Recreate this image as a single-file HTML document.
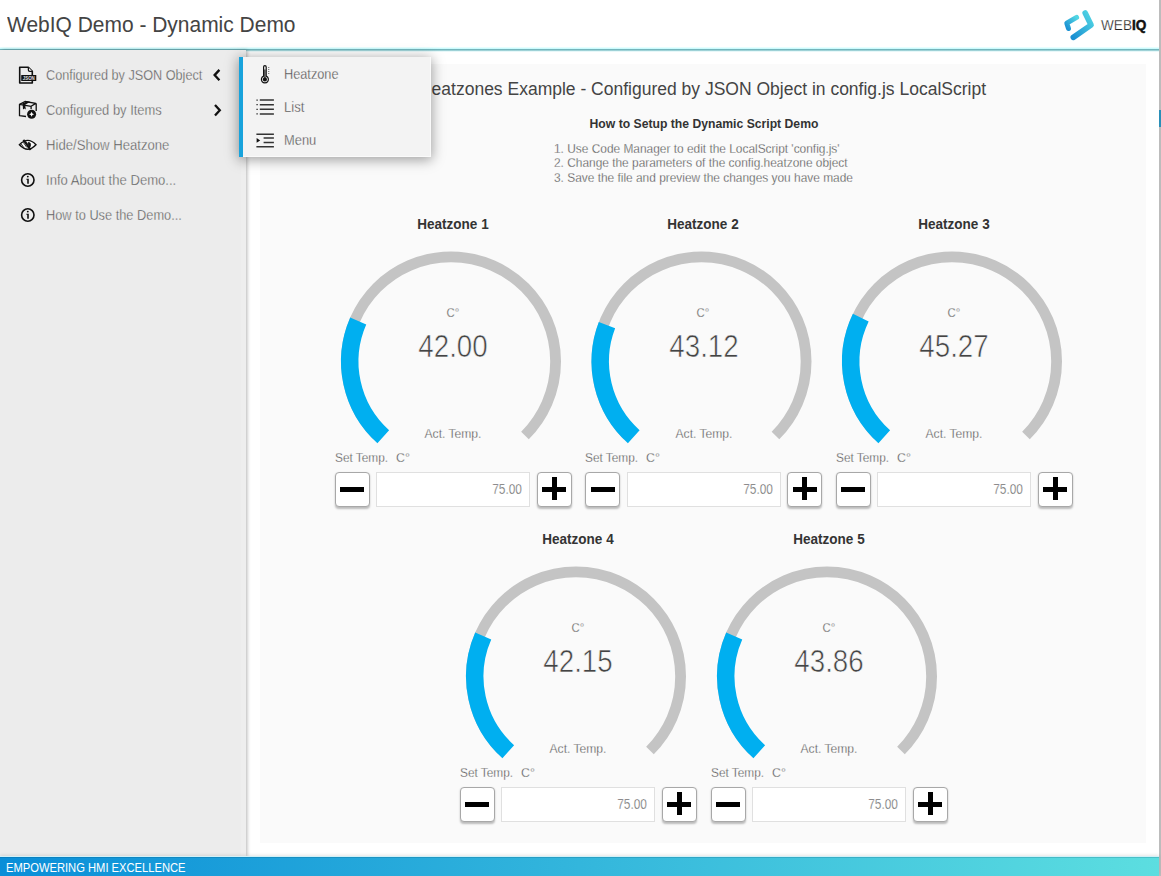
<!DOCTYPE html>
<html><head><meta charset="utf-8"><style>
*{margin:0;padding:0;box-sizing:border-box}
html,body{width:1161px;height:876px;overflow:hidden;background:#fff;font-family:"Liberation Sans", sans-serif;position:relative}
.abs{position:absolute}
.t{position:absolute;white-space:nowrap;line-height:normal}
#hline{position:absolute;left:0;top:47px;width:1159px;height:5px;background:linear-gradient(180deg,#f4ffff 0,#c9fbfd 1.6px,#74b5bc 1.9px,#74b5bc 3.2px,#c8eef1 3.8px,#fff 5px)}
#hline2{display:none}
#side{position:absolute;left:0;top:50px;width:246px;height:807px;background:linear-gradient(90deg,#ececec 241px,#eeeeee 241px);box-shadow:1.5px 0 3.5px rgba(0,0,0,.28)}
#panel{position:absolute;left:260px;top:64px;width:886px;height:779px;background:#fafafa}
#scroll{position:absolute;left:1159px;top:0;width:2px;height:876px;background:#bcbcbc}
#scrollacc{position:absolute;left:1159px;top:110px;width:2px;height:17px;background:#2a8fb8}
#foot{position:absolute;left:0;top:857px;width:1159px;height:19px;background:linear-gradient(90deg,#0a8ed8,#5cdee0);box-shadow:inset 0 1px 0 rgba(0,60,90,.18),0 -1px 0 #d2f1f8,0 -2px 3px rgba(0,0,0,.1)}
#pop{position:absolute;left:239px;top:57px;width:192px;height:100px;background:#f3f3f3;border-left:4px solid #18a3dc;box-shadow:inset -1px -1px 0 rgba(255,255,255,.55),0 2px 12px 1px rgba(0,0,0,.37)}
.btn{position:absolute;width:35px;height:35px;background:#fff;border:1px solid #a8a8a8;border-radius:4px;box-shadow:0 1.5px 2px rgba(0,0,0,.25)}
.mh{position:absolute;left:4.6px;top:14.3px;width:24px;height:5px;background:#000}
.mv{position:absolute;left:14.2px;top:4.8px;width:5px;height:23px;background:#000}
.inp{position:absolute;width:154px;height:35px;background:#fff;border:1px solid #e0e0e0}
</style></head><body>
<div class="t" style="left:6.5px;top:12.94px;font-size:21.5px;color:#444;font-weight:normal;transform:scaleX(0.975);transform-origin:0 0;">WebIQ Demo - Dynamic Demo</div>
<div id="hline"></div><div id="hline2"></div>
<svg class="abs" style="left:1055px;top:5.5px" width="45" height="40" viewBox="0 0 45 40">
<defs><linearGradient id="lg" x1="0" y1="1" x2="1" y2="0"><stop offset="0" stop-color="#1a90d2"/><stop offset="1" stop-color="#52d6e4"/></linearGradient></defs>
<path d="M21.6 11.4L11.8 17.2l1.7 5.3" fill="none" stroke="url(#lg)" stroke-width="5.0" stroke-linecap="round" stroke-linejoin="round"/>
<path d="M30.2 6.9l5.9 12.1L18.3 31.4" fill="none" stroke="url(#lg)" stroke-width="5.6" stroke-linecap="round" stroke-linejoin="round"/>
</svg>
<div class="t" style="left:1101px;top:16.93px;font-size:14px;color:#222;font-weight:normal;transform:scaleX(0.97);transform-origin:0 0;-webkit-text-stroke:0.25px #fff;">WEB<b style="color:#111;-webkit-text-stroke:0.5px #111">IQ</b></div>
<div id="panel"></div>
<div id="side"></div><div id="sideedge"></div>
<div class="t" style="left:45.7px;top:67.13px;font-size:14px;color:#4c4c4c;font-weight:normal;transform:scaleX(0.905);transform-origin:0 0;-webkit-text-stroke:0.35px #ececec;">Configured by JSON Object</div>
<div class="t" style="left:45.7px;top:102.13px;font-size:14px;color:#4c4c4c;font-weight:normal;transform:scaleX(0.924);transform-origin:0 0;-webkit-text-stroke:0.35px #ececec;">Configured by Items</div>
<div class="t" style="left:45.7px;top:137.13px;font-size:14px;color:#4c4c4c;font-weight:normal;transform:scaleX(0.938);transform-origin:0 0;-webkit-text-stroke:0.35px #ececec;">Hide/Show Heatzone</div>
<div class="t" style="left:45.7px;top:172.13px;font-size:14px;color:#4c4c4c;font-weight:normal;transform:scaleX(0.935);transform-origin:0 0;-webkit-text-stroke:0.35px #ececec;">Info About the Demo...</div>
<div class="t" style="left:45.7px;top:207.13px;font-size:14px;color:#4c4c4c;font-weight:normal;transform:scaleX(0.914);transform-origin:0 0;-webkit-text-stroke:0.35px #ececec;">How to Use the Demo...</div>
<svg class="abs" style="left:0;top:0" width="1161" height="876" viewBox="0 0 1161 876">
<!-- JSON file icon -->
<path d="M19.7 67.2h8.6l4 4v11.8h-12.6z" fill="none" stroke="#111" stroke-width="1.6" stroke-linejoin="round"/>
<path d="M28.4 67.4v2.5a1.4 1.4 0 0 0 1.4 1.4h2.4" fill="#fff" stroke="#111" stroke-width="1.3"/>
<rect x="21.2" y="75" width="15.1" height="5.9" rx="0.5" fill="#111"/>
<text x="28.75" y="79.5" font-size="4.8" font-weight="bold" fill="#e0e0e0" text-anchor="middle" font-family="Liberation Sans" textLength="12" lengthAdjust="spacingAndGlyphs">JSON</text>
<!-- Box icon -->
<path d="M19.5 104.4L25 101.5L35.8 103.4L31.1 106.3Z M19.5 104.4V115.7L26 116.5 M31.1 106.3V109 M36.2 103.6V111" fill="none" stroke="#111" stroke-width="1.3" stroke-linejoin="round"/>
<path d="M22.3 103.2L27.5 101.3L30.2 101.8L25.2 104.8L25.8 109.6L24.4 108.6L23 109.6L22.7 104.6Z" fill="#111"/>
<circle cx="31.6" cy="114.3" r="4.5" fill="#111"/>
<path d="M31.6 111.8Q32 113.9 34.1 114.3Q32 114.7 31.6 116.8Q31.2 114.7 29.1 114.3Q31.2 113.9 31.6 111.8Z" fill="#fff"/>
<!-- Eye icon -->
<path d="M19.4 144.8C22.5 141.6 25 140.4 27.7 140.4S33 141.6 36 144.8C33 148 30.4 149.3 27.7 149.3S22.5 148 19.4 144.8z" fill="#fafafa" stroke="#111" stroke-width="1.4"/>
<path d="M28.1 142.3a2.6 2.6 0 0 1 0 5.2z" fill="#111" stroke="#111" stroke-width="0.6"/>
<path d="M23.4 139.8L30.6 149.9" stroke="#111" stroke-width="2"/>
<path d="M21 143.6l3.2 4.6 M23.2 142.2l3.6 5.2 M25.6 141.2l3.4 4.9" stroke="#222" stroke-width="0.9"/>
<!-- Info icons -->
<circle cx="27.8" cy="180" r="6.2" fill="none" stroke="#111" stroke-width="1.6"/>
<circle cx="27.8" cy="176.6" r="0.95" fill="#111"/>
<path d="M26.4 178.7h2.4v5h-1.6v-3.9h-0.8z" fill="#111"/>
<circle cx="27.8" cy="215" r="6.2" fill="none" stroke="#111" stroke-width="1.6"/>
<circle cx="27.8" cy="211.6" r="0.95" fill="#111"/>
<path d="M26.4 213.7h2.4v5h-1.6v-3.9h-0.8z" fill="#111"/>
<!-- chevrons -->
<path d="M219.4 69.9L214.6 75.1l4.8 5.2" fill="none" stroke="#111" stroke-width="2.3"/>
<path d="M215 105L219.8 110.3l-4.8 5.2" fill="none" stroke="#111" stroke-width="2.3"/>
</svg>
<div class="t" style="left:302.5px;width:800px;text-align:center;top:79.36px;font-size:17.5px;color:#444;font-weight:normal;">Heatzones Example - Configured by JSON Object in config.js LocalScript</div>
<div class="t" style="left:303.5px;width:800px;text-align:center;top:116.59px;font-size:12.5px;color:#333;font-weight:bold;transform:scaleX(0.975);transform-origin:50% 0;">How to Setup the Dynamic Script Demo</div>
<div class="t" style="left:553.8px;top:141.13px;font-size:13px;color:#4a4a4a;font-weight:normal;transform:scaleX(0.915);transform-origin:0 0;-webkit-text-stroke:0.28px #fafafa;">1. Use Code Manager to edit the LocalScript 'config.js'</div>
<div class="t" style="left:553.8px;top:155.44px;font-size:13px;color:#4a4a4a;font-weight:normal;transform:scaleX(0.915);transform-origin:0 0;-webkit-text-stroke:0.28px #fafafa;">2. Change the parameters of the config.heatzone object</div>
<div class="t" style="left:553.8px;top:169.74px;font-size:13px;color:#4a4a4a;font-weight:normal;transform:scaleX(0.915);transform-origin:0 0;-webkit-text-stroke:0.28px #fafafa;">3. Save the file and preview the changes you have made</div>
<svg class="abs" style="left:0;top:0" width="1161" height="876"><path d="M377.04 435.46A104.6 104.6 0 1 1 524.96 435.46" stroke="#c4c4c4" stroke-width="10.8" fill="none"/>
<path d="M383.25 436.74A101.25 101.25 0 0 1 358.22 320.96" stroke="#00aff0" stroke-width="17.5" fill="none"/>
<path d="M627.54 435.46A104.6 104.6 0 1 1 775.46 435.46" stroke="#c4c4c4" stroke-width="10.8" fill="none"/>
<path d="M633.75 436.74A101.25 101.25 0 0 1 606.97 325.22" stroke="#00aff0" stroke-width="17.5" fill="none"/>
<path d="M878.04 435.46A104.6 104.6 0 1 1 1025.96 435.46" stroke="#c4c4c4" stroke-width="10.8" fill="none"/>
<path d="M884.25 436.74A101.25 101.25 0 0 1 860.77 317.59" stroke="#00aff0" stroke-width="17.5" fill="none"/>
<path d="M502.04 750.46A104.6 104.6 0 1 1 649.96 750.46" stroke="#c4c4c4" stroke-width="10.8" fill="none"/>
<path d="M508.25 751.74A101.25 101.25 0 0 1 483.22 635.96" stroke="#00aff0" stroke-width="17.5" fill="none"/>
<path d="M753.04 750.46A104.6 104.6 0 1 1 900.96 750.46" stroke="#c4c4c4" stroke-width="10.8" fill="none"/>
<path d="M759.25 751.74A101.25 101.25 0 0 1 734.22 635.96" stroke="#00aff0" stroke-width="17.5" fill="none"/></svg>
<div class="t" style="left:52.5px;width:800px;text-align:center;top:215.66px;font-size:14.3px;color:#333;font-weight:bold;transform:scaleX(0.945);transform-origin:50% 0;">Heatzone 1</div>
<div class="t" style="left:52.5px;width:800px;text-align:center;top:306.04px;font-size:12px;color:#4c4c4c;font-weight:normal;transform:scaleX(0.95);transform-origin:50% 0;-webkit-text-stroke:0.3px #fafafa;">C°</div>
<div class="t" style="left:53px;width:800px;text-align:center;top:328.71px;font-size:30.6px;color:#444;font-weight:normal;transform:scaleX(0.905);transform-origin:50% 0;-webkit-text-stroke:0.6px #fafafa;">42.00</div>
<div class="t" style="left:53px;width:800px;text-align:center;top:426.13px;font-size:13px;color:#4c4c4c;font-weight:normal;transform:scaleX(0.93);transform-origin:50% 0;-webkit-text-stroke:0.3px #fafafa;">Act. Temp.</div>
<div class="t" style="left:334.5px;top:450.44px;font-size:13px;color:#4c4c4c;font-weight:normal;transform:scaleX(0.91);transform-origin:0 0;-webkit-text-stroke:0.3px #fafafa;">Set Temp.</div>
<div class="t" style="left:395.8px;top:450.44px;font-size:13px;color:#4c4c4c;font-weight:normal;transform:scaleX(0.95);transform-origin:0 0;-webkit-text-stroke:0.3px #fafafa;">C°</div>
<div class="btn" style="left:334.5px;top:471.5px"><div class="mh"></div></div>
<div class="inp" style="left:376px;top:471.5px"></div>
<div class="t" style="left:-278px;width:800px;text-align:right;top:481.33px;font-size:14px;color:#585858;font-weight:normal;transform:scaleX(0.85);transform-origin:100% 0;-webkit-text-stroke:0.35px #fff;">75.00</div>
<div class="btn" style="left:536.5px;top:471.5px"><div class="mh"></div><div class="mv"></div></div>
<div class="t" style="left:303.0px;width:800px;text-align:center;top:215.66px;font-size:14.3px;color:#333;font-weight:bold;transform:scaleX(0.945);transform-origin:50% 0;">Heatzone 2</div>
<div class="t" style="left:303.0px;width:800px;text-align:center;top:306.04px;font-size:12px;color:#4c4c4c;font-weight:normal;transform:scaleX(0.95);transform-origin:50% 0;-webkit-text-stroke:0.3px #fafafa;">C°</div>
<div class="t" style="left:303.5px;width:800px;text-align:center;top:328.71px;font-size:30.6px;color:#444;font-weight:normal;transform:scaleX(0.905);transform-origin:50% 0;-webkit-text-stroke:0.6px #fafafa;">43.12</div>
<div class="t" style="left:303.5px;width:800px;text-align:center;top:426.13px;font-size:13px;color:#4c4c4c;font-weight:normal;transform:scaleX(0.93);transform-origin:50% 0;-webkit-text-stroke:0.3px #fafafa;">Act. Temp.</div>
<div class="t" style="left:585.0px;top:450.44px;font-size:13px;color:#4c4c4c;font-weight:normal;transform:scaleX(0.91);transform-origin:0 0;-webkit-text-stroke:0.3px #fafafa;">Set Temp.</div>
<div class="t" style="left:646.3px;top:450.44px;font-size:13px;color:#4c4c4c;font-weight:normal;transform:scaleX(0.95);transform-origin:0 0;-webkit-text-stroke:0.3px #fafafa;">C°</div>
<div class="btn" style="left:585.0px;top:471.5px"><div class="mh"></div></div>
<div class="inp" style="left:626.5px;top:471.5px"></div>
<div class="t" style="left:-27.5px;width:800px;text-align:right;top:481.33px;font-size:14px;color:#585858;font-weight:normal;transform:scaleX(0.85);transform-origin:100% 0;-webkit-text-stroke:0.35px #fff;">75.00</div>
<div class="btn" style="left:787.0px;top:471.5px"><div class="mh"></div><div class="mv"></div></div>
<div class="t" style="left:553.5px;width:800px;text-align:center;top:215.66px;font-size:14.3px;color:#333;font-weight:bold;transform:scaleX(0.945);transform-origin:50% 0;">Heatzone 3</div>
<div class="t" style="left:553.5px;width:800px;text-align:center;top:306.04px;font-size:12px;color:#4c4c4c;font-weight:normal;transform:scaleX(0.95);transform-origin:50% 0;-webkit-text-stroke:0.3px #fafafa;">C°</div>
<div class="t" style="left:554px;width:800px;text-align:center;top:328.71px;font-size:30.6px;color:#444;font-weight:normal;transform:scaleX(0.905);transform-origin:50% 0;-webkit-text-stroke:0.6px #fafafa;">45.27</div>
<div class="t" style="left:554px;width:800px;text-align:center;top:426.13px;font-size:13px;color:#4c4c4c;font-weight:normal;transform:scaleX(0.93);transform-origin:50% 0;-webkit-text-stroke:0.3px #fafafa;">Act. Temp.</div>
<div class="t" style="left:835.5px;top:450.44px;font-size:13px;color:#4c4c4c;font-weight:normal;transform:scaleX(0.91);transform-origin:0 0;-webkit-text-stroke:0.3px #fafafa;">Set Temp.</div>
<div class="t" style="left:896.8px;top:450.44px;font-size:13px;color:#4c4c4c;font-weight:normal;transform:scaleX(0.95);transform-origin:0 0;-webkit-text-stroke:0.3px #fafafa;">C°</div>
<div class="btn" style="left:835.5px;top:471.5px"><div class="mh"></div></div>
<div class="inp" style="left:877px;top:471.5px"></div>
<div class="t" style="left:223px;width:800px;text-align:right;top:481.33px;font-size:14px;color:#585858;font-weight:normal;transform:scaleX(0.85);transform-origin:100% 0;-webkit-text-stroke:0.35px #fff;">75.00</div>
<div class="btn" style="left:1037.5px;top:471.5px"><div class="mh"></div><div class="mv"></div></div>
<div class="t" style="left:177.5px;width:800px;text-align:center;top:530.66px;font-size:14.3px;color:#333;font-weight:bold;transform:scaleX(0.945);transform-origin:50% 0;">Heatzone 4</div>
<div class="t" style="left:177.5px;width:800px;text-align:center;top:621.04px;font-size:12px;color:#4c4c4c;font-weight:normal;transform:scaleX(0.95);transform-origin:50% 0;-webkit-text-stroke:0.3px #fafafa;">C°</div>
<div class="t" style="left:178px;width:800px;text-align:center;top:643.71px;font-size:30.6px;color:#444;font-weight:normal;transform:scaleX(0.905);transform-origin:50% 0;-webkit-text-stroke:0.6px #fafafa;">42.15</div>
<div class="t" style="left:178px;width:800px;text-align:center;top:741.13px;font-size:13px;color:#4c4c4c;font-weight:normal;transform:scaleX(0.93);transform-origin:50% 0;-webkit-text-stroke:0.3px #fafafa;">Act. Temp.</div>
<div class="t" style="left:459.5px;top:765.44px;font-size:13px;color:#4c4c4c;font-weight:normal;transform:scaleX(0.91);transform-origin:0 0;-webkit-text-stroke:0.3px #fafafa;">Set Temp.</div>
<div class="t" style="left:520.8px;top:765.44px;font-size:13px;color:#4c4c4c;font-weight:normal;transform:scaleX(0.95);transform-origin:0 0;-webkit-text-stroke:0.3px #fafafa;">C°</div>
<div class="btn" style="left:459.5px;top:786.5px"><div class="mh"></div></div>
<div class="inp" style="left:501px;top:786.5px"></div>
<div class="t" style="left:-153px;width:800px;text-align:right;top:796.33px;font-size:14px;color:#585858;font-weight:normal;transform:scaleX(0.85);transform-origin:100% 0;-webkit-text-stroke:0.35px #fff;">75.00</div>
<div class="btn" style="left:661.5px;top:786.5px"><div class="mh"></div><div class="mv"></div></div>
<div class="t" style="left:428.5px;width:800px;text-align:center;top:530.66px;font-size:14.3px;color:#333;font-weight:bold;transform:scaleX(0.945);transform-origin:50% 0;">Heatzone 5</div>
<div class="t" style="left:428.5px;width:800px;text-align:center;top:621.04px;font-size:12px;color:#4c4c4c;font-weight:normal;transform:scaleX(0.95);transform-origin:50% 0;-webkit-text-stroke:0.3px #fafafa;">C°</div>
<div class="t" style="left:429px;width:800px;text-align:center;top:643.71px;font-size:30.6px;color:#444;font-weight:normal;transform:scaleX(0.905);transform-origin:50% 0;-webkit-text-stroke:0.6px #fafafa;">43.86</div>
<div class="t" style="left:429px;width:800px;text-align:center;top:741.13px;font-size:13px;color:#4c4c4c;font-weight:normal;transform:scaleX(0.93);transform-origin:50% 0;-webkit-text-stroke:0.3px #fafafa;">Act. Temp.</div>
<div class="t" style="left:710.5px;top:765.44px;font-size:13px;color:#4c4c4c;font-weight:normal;transform:scaleX(0.91);transform-origin:0 0;-webkit-text-stroke:0.3px #fafafa;">Set Temp.</div>
<div class="t" style="left:771.8px;top:765.44px;font-size:13px;color:#4c4c4c;font-weight:normal;transform:scaleX(0.95);transform-origin:0 0;-webkit-text-stroke:0.3px #fafafa;">C°</div>
<div class="btn" style="left:710.5px;top:786.5px"><div class="mh"></div></div>
<div class="inp" style="left:752px;top:786.5px"></div>
<div class="t" style="left:98px;width:800px;text-align:right;top:796.33px;font-size:14px;color:#585858;font-weight:normal;transform:scaleX(0.85);transform-origin:100% 0;-webkit-text-stroke:0.35px #fff;">75.00</div>
<div class="btn" style="left:912.5px;top:786.5px"><div class="mh"></div><div class="mv"></div></div>
<div id="pop"></div>
<svg class="abs" style="left:0;top:0" width="1161" height="876" viewBox="0 0 1161 876">
<path d="M263.6 76.15V66.9a1.3 1.3 0 0 1 2.6 0V76.15a3.5 3.5 0 1 1 -2.6 0z" fill="#f7f7f7" stroke="#111" stroke-width="1.2"/>
<circle cx="264.9" cy="79.4" r="2.1" fill="#111"/><rect x="264.35" y="69.5" width="1.1" height="9" fill="#111"/>
<path d="M268.1 67.5h1.2M268.1 69.5h1.2M268.1 71.5h1.2M268.1 73.5h1.2" stroke="#444" stroke-width="0.7"/>
<path d="M259.8 100.1h14.1M259.8 104.7h14.1M259.8 109.3h14.1M259.8 113.9h14.1" stroke="#333" stroke-width="1.5"/>
<path d="M256.4 100.1h1.4M256.4 104.7h1.4M256.4 109.3h1.4M256.4 113.9h1.4" stroke="#333" stroke-width="1.3"/>
<path d="M256.4 134.3h17.5M263.6 138.1h10.3M263.6 142.4h10.3M256.4 146.8h17.5" stroke="#333" stroke-width="1.5"/>
<path d="M256.6 138.1l3.6 2.3-3.6 2.3z" fill="#111"/>
</svg>
<div class="t" style="left:283.6px;top:66.23px;font-size:14px;color:#484848;font-weight:normal;transform:scaleX(0.91);transform-origin:0 0;-webkit-text-stroke:0.3px #f3f3f3;">Heatzone</div>
<div class="t" style="left:283.6px;top:99.33px;font-size:14px;color:#484848;font-weight:normal;transform:scaleX(0.93);transform-origin:0 0;-webkit-text-stroke:0.3px #f3f3f3;">List</div>
<div class="t" style="left:283.6px;top:132.43px;font-size:14px;color:#484848;font-weight:normal;transform:scaleX(0.92);transform-origin:0 0;-webkit-text-stroke:0.3px #f3f3f3;">Menu</div>
<div id="scroll"></div><div id="scrollacc"></div>
<div id="foot"></div>
<div class="t" style="left:6.3px;top:860.24px;font-size:13px;color:#fff;font-weight:normal;transform:scaleX(0.86);transform-origin:0 0;">EMPOWERING HMI EXCELLENCE</div>
</body></html>
